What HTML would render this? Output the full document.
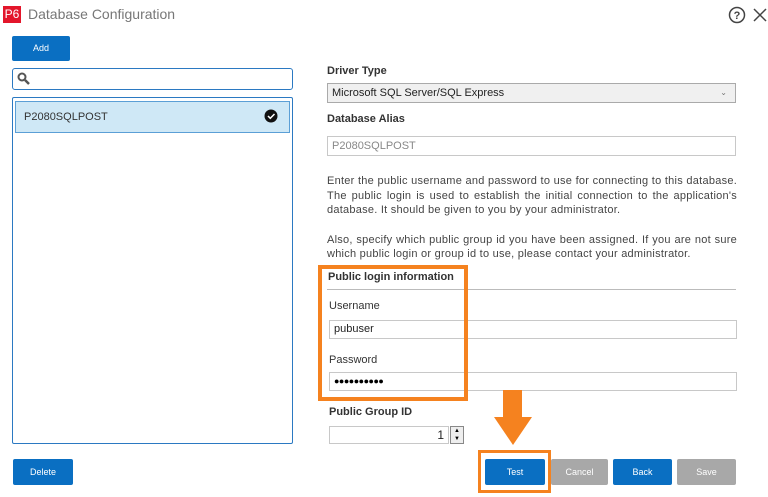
<!DOCTYPE html><html><head><style>
body{margin:0;width:768px;height:497px;background:#fff;position:relative;overflow:hidden;font-family:"Liberation Sans",sans-serif;}
.a{position:absolute}
.btn{position:absolute;color:#fff;font-size:9px;text-align:center;border-radius:2px;}
.lbl{position:absolute;font-size:11px;font-weight:bold;color:#333;}
.inp{position:absolute;border:1px solid #c8c8c8;background:#fff;font-size:11px;box-sizing:border-box;padding-left:4px;}
p{margin:0}
</style></head><body>
<div class="a" style="left:3px;top:6px;width:18px;height:17px;background:#e3162b;color:#fff;font-size:12px;line-height:17px;text-align:center">P6</div>
<div class="a" style="left:28px;top:6px;font-size:14px;color:#777">Database Configuration</div>
<svg class="a" style="left:728px;top:6px" width="40" height="20"><circle cx="9" cy="9" r="7.5" fill="none" stroke="#444" stroke-width="1.5"/><text x="9" y="13" font-size="11" font-weight="bold" text-anchor="middle" fill="#444" font-family="Liberation Sans">?</text><path d="M26 3 L38 15 M38 3 L26 15" stroke="#444" stroke-width="1.5"/></svg>
<div class="btn" style="left:12px;top:36px;width:58px;height:25px;line-height:25px;background:#0a6fc2">Add</div>
<div class="a" style="left:12px;top:68px;width:279px;height:20px;border:1px solid #2b79c2;border-radius:3px"></div>
<svg class="a" style="left:17px;top:72px" width="14" height="14"><circle cx="5" cy="5" r="3.5" fill="none" stroke="#555" stroke-width="2"/><path d="M8 8 L12 12" stroke="#555" stroke-width="2.5"/></svg>
<div class="a" style="left:12px;top:97px;width:279px;height:345px;border:1px solid #2b79c2;border-radius:2px"></div>
<div class="a" style="left:15px;top:101px;width:273px;height:30px;background:#cfe8f6;border:1px solid #5b9fd6"></div>
<div class="a" style="left:24px;top:111px;font-size:11px;color:#333">P2080SQLPOST</div>
<svg class="a" style="left:264px;top:109px" width="14" height="14"><circle cx="7" cy="7" r="6.5" fill="#111"/><path d="M4 7 L6.3 9.3 L10.5 5" stroke="#fff" stroke-width="1.5" fill="none"/></svg>
<div class="btn" style="left:13px;top:459px;width:60px;height:26px;line-height:26px;background:#0a6fc2">Delete</div>
<div class="lbl" style="left:327px;top:65px">Driver Type</div>
<div class="inp" style="left:327px;top:83px;width:409px;height:20px;line-height:18px;background:#f0f0f0;border-color:#aaa;color:#222">Microsoft SQL Server/SQL Express<span style="position:absolute;right:8px;font-size:8px;color:#777">⌄</span></div>
<div class="lbl" style="left:327px;top:113px">Database Alias</div>
<div class="inp" style="left:327px;top:136px;width:409px;height:20px;line-height:18px;color:#888">P2080SQLPOST</div>
<div class="a" style="left:327px;top:174px;width:410px;font-size:11px;letter-spacing:0.25px;line-height:14.5px;color:#444;text-align:justify"><p>Enter the public username and password to use for connecting to this database. The public login is used to establish the initial connection to the application's database. It should be given to you by your administrator.</p><p style="margin-top:15px">Also, specify which public group id you have been assigned. If you are not sure which public login or group id to use, please contact your administrator.</p></div>
<div class="lbl" style="left:328px;top:271px">Public login information</div>
<div class="a" style="left:327px;top:289px;width:409px;height:1px;background:#bbb"></div>
<div class="lbl" style="left:329px;top:300px;font-weight:normal;color:#333">Username</div>
<div class="inp" style="left:329px;top:320px;width:408px;height:19px;line-height:17px;color:#222">pubuser</div>
<div class="lbl" style="left:329px;top:354px;font-weight:normal;color:#333">Password</div>
<div class="inp" style="left:329px;top:372px;width:408px;height:19px;line-height:17px;color:#000;font-size:9px;letter-spacing:-0.5px">●●●●●●●●●●</div>
<div class="a" style="left:318px;top:265px;width:142px;height:128px;border:4px solid #f5821f"></div>
<div class="lbl" style="left:329px;top:406px">Public Group ID</div>
<div class="inp" style="left:329px;top:426px;width:120px;height:18px;line-height:16px;text-align:right;padding-right:4px;color:#222;font-size:12px">1</div>
<div class="a" style="left:450px;top:426px;width:14px;height:18px;border:1px solid #888;box-sizing:border-box;background:#eee;font-size:6px;line-height:8px;text-align:center">▲<br>▼</div>
<div class="a" style="left:503px;top:390px;width:19px;height:30px;background:#f5821f"></div>
<svg class="a" style="left:494px;top:417px" width="40" height="29"><path d="M0 0 L38 0 L19 28Z" fill="#f5821f"/></svg>
<div class="a" style="left:478px;top:450px;width:67px;height:37px;border:3px solid #f5821f"></div>
<div class="btn" style="left:485px;top:459px;width:60px;height:26px;line-height:26px;background:#0a6fc2">Test</div>
<div class="btn" style="left:551px;top:459px;width:57px;height:26px;line-height:26px;background:#a8a8a8">Cancel</div>
<div class="btn" style="left:613px;top:459px;width:59px;height:26px;line-height:26px;background:#0a6fc2">Back</div>
<div class="btn" style="left:677px;top:459px;width:59px;height:26px;line-height:26px;background:#a8a8a8">Save</div>
</body></html>
